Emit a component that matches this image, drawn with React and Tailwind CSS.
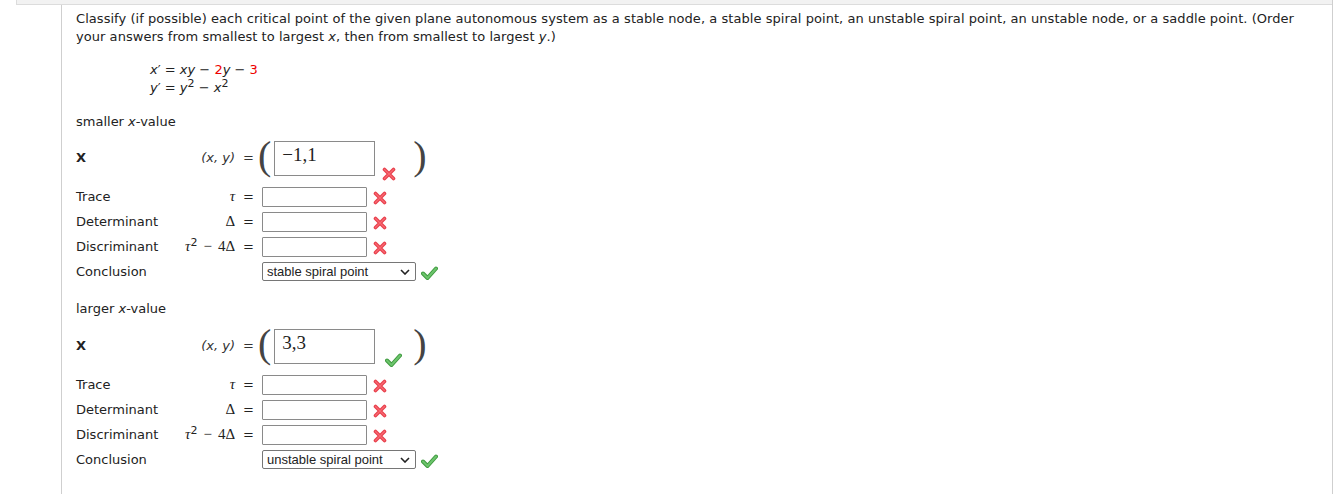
import React from "react";

const serif = { fontFamily: '"Liberation Serif", "DejaVu Serif", serif' };

function RedX({ className = "" }) {
  return (
    <svg width="14" height="14" viewBox="0 0 14 14" className={className}>
      <path d="M2.5 2.5 L11.5 11.5 M11.5 2.5 L2.5 11.5" stroke="#e8404c" strokeWidth="3.6" strokeLinecap="round" />
      <path d="M2.5 2.5 L11.5 11.5 M11.5 2.5 L2.5 11.5" stroke="#ff7b84" strokeWidth="1.2" strokeLinecap="round" opacity="0.7" />
    </svg>
  );
}

function Check({ className = "" }) {
  return (
    <svg width="17" height="14" viewBox="0 0 17 14" className={className}>
      <path d="M2 7.5 L6.5 12 L15 2.5" fill="none" stroke="#3f9a3f" strokeWidth="4" strokeLinecap="round" strokeLinejoin="round" />
      <path d="M2 7.5 L6.5 12 L15 2.5" fill="none" stroke="#6cc46c" strokeWidth="2" strokeLinecap="round" strokeLinejoin="round" />
    </svg>
  );
}

function Select({ value }) {
  return (
    <div
      className="relative h-[19px] w-[154px] border border-[#767676] rounded-[2px] bg-white flex items-center pl-[4px] text-[13px] text-[#222]"
      style={{ fontFamily: '"Liberation Sans", Arial, sans-serif' }}
    >
      {value}
      <svg width="10" height="6" viewBox="0 0 10 6" className="absolute right-[5px] top-[6px]">
        <path d="M1 1 L5 5 L9 1" fill="none" stroke="#222" strokeWidth="1.6" />
      </svg>
    </div>
  );
}

function Row({ label, math, children }) {
  return (
    <div className="flex items-center h-[25px]">
      <div className="w-[100px]">{label}</div>
      <div className="w-[78px] text-right whitespace-nowrap">{math}</div>
      <div className="ml-[8px] flex items-center">{children}</div>
    </div>
  );
}

function Blank() {
  return (
    <>
      <div className="h-[20px] w-[105px] border border-[#8a8a8a] rounded-[1px] bg-white" />
      <RedX className="ml-[6px] mt-[3px]" />
    </>
  );
}

function Eq() {
  return <span className="ml-[8px]">=</span>;
}

function Point({ value, correct, conclusion }) {
  return (
    <div>
      <div className="flex items-center h-[38px]">
        <div className="w-[100px] font-bold">X</div>
        <div className="w-[78px] text-right whitespace-nowrap text-[#333]">
          <span className="italic">(x, y)</span>
          <Eq />
        </div>
        <div className="ml-[4px] flex items-center h-[38px]">
          <span className="text-[40px] leading-none font-light text-[#444] -mt-[4px]" style={serif}>(</span>
          <div
            className="ml-[3px] h-[35px] w-[101px] border border-[#8a8a8a] bg-white pl-[7px] pt-[4px] text-[19px] text-[#222]"
            style={serif}
          >
            {value}
          </div>
          <div className="w-[38px] h-[38px] relative">
            {correct ? (
              <Check className="absolute left-[10px] top-[26px]" />
            ) : (
              <RedX className="absolute left-[7px] top-[28px]" />
            )}
          </div>
          <span className="text-[40px] leading-none font-light text-[#444] -mt-[4px]" style={serif}>)</span>
        </div>
      </div>
      <div className="h-[7px]" />
      <Row label="Trace" math={<><span className="italic text-[15px]" style={serif}>τ</span><Eq /></>}>
        <Blank />
      </Row>
      <Row label="Determinant" math={<><span className="text-[15px]" style={serif}>Δ</span><Eq /></>}>
        <Blank />
      </Row>
      <Row
        label="Discriminant"
        math={
          <>
            <span className="text-[15px]" style={serif}>
              <i>τ</i>
              <sup className="text-[11px] -top-[5px] relative align-baseline" style={{ fontFamily: '"DejaVu Sans", sans-serif' }}>2</sup>
              <span className="ml-[6px]">−</span>
              <span className="ml-[6px]">4Δ</span>
            </span>
            <Eq />
          </>
        }
      >
        <Blank />
      </Row>
      <Row label="Conclusion" math={null}>
        <Select value={conclusion} />
        <Check className="ml-[5px] mt-[2px]" />
      </Row>
    </div>
  );
}

export default function App() {
  return (
    <div
      className="w-full h-[494px] bg-white overflow-hidden text-[13px] leading-[18px] text-[#222]"
      style={{ fontFamily: '"DejaVu Sans", Verdana, sans-serif' }}
    >
      <div className="ml-[16px] w-[1317px] h-full border-r border-[#cfcfcf]">
        <div className="h-[5px] bg-[#f2f2f2] border-b border-l border-[#dcdcdc]" />
        <div className="flex h-full">
          <div className="w-[45px]" />
          <div className="border-l border-[#cfcfcf] pl-[14px] pt-[5px] flex-1">
            <p className="tracking-[0.05px]">
              Classify (if possible) each critical point of the given plane autonomous system as a stable node, a stable spiral point, an unstable spiral point, an unstable node, or a saddle point. (Order
              <br />
              your answers from smallest to largest <i>x</i>, then from smallest to largest <i>y</i>.)
            </p>
            <div className="ml-[74px] mt-[15px]">
              <div>
                <i>x</i>′ = <i>xy</i> − <span className="text-[#e00]">2</span><i>y</i> − <span className="text-[#e00]">3</span>
              </div>
              <div>
                <i>y</i>′ = <i>y</i>
                <sup className="text-[11px] relative -top-[5px] align-baseline">2</sup> − <i>x</i>
                <sup className="text-[11px] relative -top-[5px] align-baseline">2</sup>
              </div>
            </div>
            <div className="mt-[16px]">
              smaller <i>x</i>-value
            </div>
            <div className="mt-[8px]">
              <Point value="−1,1" correct={false} conclusion="stable spiral point" />
            </div>
            <div className="mt-[16px]">
              larger <i>x</i>-value
            </div>
            <div className="mt-[9px]">
              <Point value="3,3" correct={true} conclusion="unstable spiral point" />
            </div>
          </div>
        </div>
      </div>
    </div>
  );
}
